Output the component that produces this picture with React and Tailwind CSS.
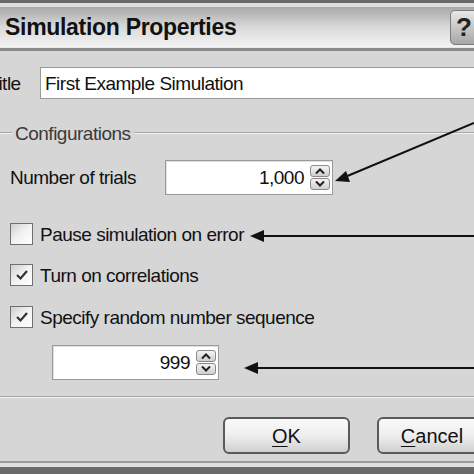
import React from "react";

const font = { fontFamily: '"Liberation Sans", Arial, sans-serif' };

function SpinBtn({ dir }) {
  return (
    <div className="flex h-[12px] w-[20px] items-center justify-center rounded-[3px] border border-[#8a8a8a] bg-gradient-to-b from-[#f4f4f4] to-[#cfcfcf]">
      <svg width="12" height="8" viewBox="0 0 12 8">
        {dir === "up" ? (
          <path d="M2 6.5 L6 2.5 L10 6.5" fill="none" stroke="#222" strokeWidth="2" />
        ) : (
          <path d="M2 1.5 L6 5.5 L10 1.5" fill="none" stroke="#222" strokeWidth="2" />
        )}
      </svg>
    </div>
  );
}

function Spinner({ value, width }) {
  return (
    <div
      className="flex h-[35px] shrink-0 items-center border border-[#9a9a9a] bg-white pr-[2px] shadow-[inset_1px_1px_0_#e0e0e0]"
      style={{ width }}
    >
      <span className="flex-1 pr-[6px] text-right text-[19px] leading-none tracking-[-0.5px] text-[#111]">{value}</span>
      <div className="flex flex-col gap-[1px]">
        <SpinBtn dir="up" />
        <SpinBtn dir="down" />
      </div>
    </div>
  );
}

function Check({ checked, label }) {
  return (
    <div className="flex h-[22px] items-center gap-[7px] pl-[10px]">
      <div className="flex h-[22px] w-[23px] shrink-0 items-center justify-center border border-[#707070] bg-gradient-to-br from-[#d0d0d0] via-[#f2f2f2] to-white">
        {checked && (
          <svg width="14" height="12" viewBox="0 0 14 12">
            <path d="M2 6 L5.5 9.5 L12 2" fill="none" stroke="#333" strokeWidth="2.2" />
          </svg>
        )}
      </div>
      <span className="text-[19px] leading-none tracking-[-0.5px] text-[#111]">{label}</span>
    </div>
  );
}

function Button({ children, className }) {
  return (
    <div
      className={
        "flex h-[37px] items-center justify-center rounded-[6px] border-2 border-[#5a5a5a] bg-gradient-to-b from-[#fafafa] via-[#eeeeee] to-[#d0d0d0] text-[20px] leading-none text-[#111] " +
        className
      }
    >
      {children}
    </div>
  );
}

export default function App() {
  return (
    <div style={font} className="relative flex h-[474px] w-[474px] flex-col overflow-hidden bg-[#d6d6d6]">
      {/* title bar */}
      <div className="h-[3px] shrink-0 bg-[#686868]" />
      <div className="h-[4px] shrink-0 bg-[#dcdcdc]" />
      <div className="flex h-[40px] shrink-0 items-center justify-between bg-gradient-to-b from-[#a9a9a9] via-[#d9d9d9] to-[#f3f3f3] pl-[5px]">
        <span className="text-[23px] font-bold leading-none tracking-[-0.3px] text-[#111]">Simulation Properties</span>
        <div className="mr-[-8px] flex h-[35px] w-[32px] items-center justify-start rounded-[5px] border border-[#7a7a7a] bg-gradient-to-b from-[#e8e8e8] to-[#a8a8a8] pl-[5px]">
          <span className="text-[26px] font-bold leading-none text-[#222]">?</span>
        </div>
      </div>
      <div className="h-[1px] shrink-0 bg-[#e8e8e8]" />
      <div className="h-[3px] shrink-0 bg-[#8a8a8a]" />

      {/* Title row */}
      <div className="mt-[16px] flex h-[32px] shrink-0 items-center">
        <span className="ml-[-12px] w-[52px] shrink-0 text-[19px] leading-none tracking-[-0.5px] text-[#111]">Title</span>
        <div className="mr-[-4px] flex h-[32px] flex-1 items-center border border-[#9a9a9a] bg-white pl-[4px]">
          <span className="text-[19px] leading-none tracking-[-0.5px] text-[#111]">First Example Simulation</span>
        </div>
      </div>

      {/* group legend */}
      <div className="mt-[23px] flex h-[22px] shrink-0 items-center">
        <div className="h-[2px] w-[12px] border-t border-b border-t-[#a8a8a8] border-b-[#f0f0f0]" />
        <span className="px-[3px] text-[19px] leading-none tracking-[-0.5px] text-[#3a3a3a]">Configurations</span>
        <div className="h-[2px] flex-1 border-t border-b border-t-[#a8a8a8] border-b-[#f0f0f0]" />
      </div>

      {/* number of trials */}
      <div className="mt-[16px] flex h-[35px] shrink-0 items-center">
        <span className="w-[165px] shrink-0 pl-[10px] text-[19px] leading-none tracking-[-0.5px] text-[#111]">Number of trials</span>
        <Spinner value="1,000" width={168} />
      </div>

      <div className="mt-[28px] shrink-0">
        <Check label="Pause simulation on error" />
      </div>
      <div className="mt-[19px] shrink-0">
        <Check checked label="Turn on correlations" />
      </div>
      <div className="mt-[20px] shrink-0">
        <Check checked label="Specify random number sequence" />
      </div>

      <div className="mt-[17px] shrink-0 pl-[52px]">
        <Spinner value="999" width={167} />
      </div>

      {/* group bottom */}
      <div className="mt-[16px] h-[2px] shrink-0 border-t border-b border-t-[#a8a8a8] border-b-[#f0f0f0]" />

      {/* buttons */}
      <div className="mt-[19px] flex shrink-0 gap-[27px] pl-[223px]">
        <Button className="w-[127px] shrink-0">
          <span className="underline decoration-1 underline-offset-[3px]">O</span>K
        </Button>
        <Button className="w-[110px] shrink-0">
          <span className="underline decoration-1 underline-offset-[3px]">C</span>ancel
        </Button>
      </div>

      <div className="mt-auto h-[2px] shrink-0 bg-[#9a9a9a]" />
      <div className="h-[4px] shrink-0 bg-[#dedede]" />
      <div className="h-[7px] shrink-0 bg-[#6a6a6a]" />

      {/* annotation arrows */}
      <svg className="pointer-events-none absolute left-0 top-0" width="474" height="474" viewBox="0 0 474 474">
        <g stroke="#111" strokeWidth="2" fill="#111">
          <line x1="474" y1="123" x2="345" y2="177" />
          <polygon points="335,181 346,171 350,182" stroke="none" />
          <line x1="474" y1="236" x2="262" y2="236" />
          <polygon points="250,236 264,230 264,242" stroke="none" />
          <line x1="474" y1="368" x2="257" y2="368" />
          <polygon points="244,368 258,362 258,374" stroke="none" />
        </g>
      </svg>
    </div>
  );
}
